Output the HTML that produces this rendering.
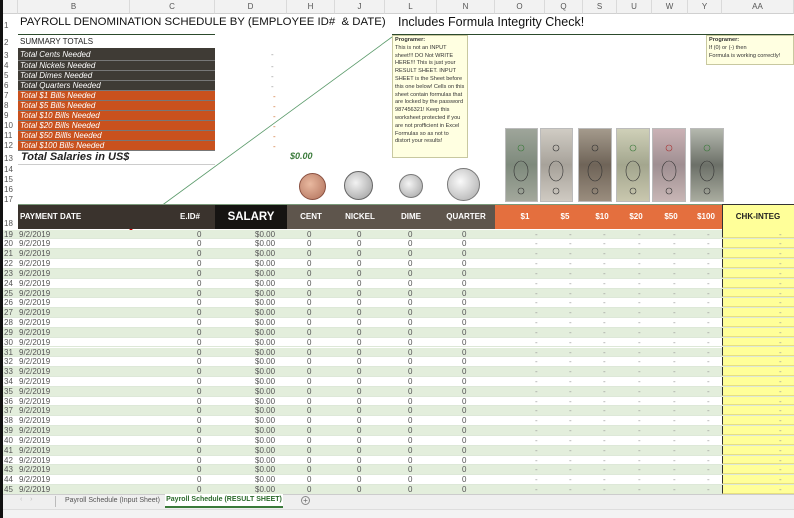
<!DOCTYPE html>
<html><head><meta charset="utf-8">
<style>
*{margin:0;padding:0;box-sizing:border-box}
body{width:794px;height:518px;overflow:hidden;background:#fff;font-family:"Liberation Sans",Arial,sans-serif;position:relative}
.a{position:absolute}
.ch{top:0;height:14px;background:#f2f2f2;border-bottom:1px solid #d0d0d0;font-size:8px;color:#555;text-align:center;line-height:14px;border-right:1px solid #dadada}
.rn{left:3px;width:15px;font-size:8px;color:#555;padding-left:1px;background:#fff}
.sum{left:18px;width:197px;height:10px;font-size:8px;font-style:italic;color:#fff;padding-left:2px;line-height:10px;border-bottom:1px solid #777}
.dk{background:#3f3b35}.or{background:#c9511d}
.dash{font-size:8px;color:#999}
.row{position:absolute;left:3px;width:791px;height:9.83px;font-size:8px;line-height:9.8px;color:#555;border-bottom:1px solid #dde8d8}
.row span{position:absolute;top:0}
.g{background:#e3eedc}
.h{top:205px;height:24px;font-size:8px;font-weight:bold;color:#fff;line-height:24px}
.bill{top:128px;height:74px;border:1px solid #bbb}
.coin{border-radius:50%}
.yel{left:722px;top:205px;width:72px;height:289px;background:#ffff99;border-left:1.5px solid #333}
</style></head><body>
<div class="a" style="left:0;top:0;width:3px;height:518px;background:#111"></div>
<div class="a ch" style="left:3px;width:15px"></div>
<div class="a ch" style="left:18px;width:112px">B</div>
<div class="a ch" style="left:130px;width:85px">C</div>
<div class="a ch" style="left:215px;width:72px">D</div>
<div class="a ch" style="left:287px;width:48px">H</div>
<div class="a ch" style="left:335px;width:50px">J</div>
<div class="a ch" style="left:385px;width:52px">L</div>
<div class="a ch" style="left:437px;width:58px">N</div>
<div class="a ch" style="left:495px;width:50px">O</div>
<div class="a ch" style="left:545px;width:38px">Q</div>
<div class="a ch" style="left:583px;width:34px">S</div>
<div class="a ch" style="left:617px;width:35px">U</div>
<div class="a ch" style="left:652px;width:36px">W</div>
<div class="a ch" style="left:688px;width:34px">Y</div>
<div class="a ch" style="left:722px;width:72px">AA</div>
<div class="a rn" style="top:21px">1</div>
<div class="a rn" style="top:38px">2</div>
<div class="a rn" style="top:51px">3</div>
<div class="a rn" style="top:61px">4</div>
<div class="a rn" style="top:71px">5</div>
<div class="a rn" style="top:81px">6</div>
<div class="a rn" style="top:91px">7</div>
<div class="a rn" style="top:101px">8</div>
<div class="a rn" style="top:111px">9</div>
<div class="a rn" style="top:121px">10</div>
<div class="a rn" style="top:131px">11</div>
<div class="a rn" style="top:141px">12</div>
<div class="a rn" style="top:154px">13</div>
<div class="a rn" style="top:165px">14</div>
<div class="a rn" style="top:175px">15</div>
<div class="a rn" style="top:185px">16</div>
<div class="a rn" style="top:195px">17</div>
<div class="a rn" style="top:219px">18</div>
<div class="a" style="left:20px;top:16px;font-size:11.4px;color:#111;white-space:nowrap">PAYROLL DENOMINATION SCHEDULE BY (EMPLOYEE ID#&nbsp; &amp; DATE)</div>
<div class="a" style="left:398px;top:15px;font-size:12.5px;color:#111">Includes Formula Integrity Check!</div>
<div class="a" style="left:18px;top:34px;width:197px;height:1px;background:#2c4a2c"></div>
<div class="a" style="left:392px;top:34px;width:402px;height:1px;background:#2c4a2c"></div>
<div class="a" style="left:20px;top:37px;font-size:8px;color:#222">SUMMARY TOTALS</div>
<div class="a sum dk" style="top:48px;height:13px;line-height:13px">Total Cents Needed</div>
<div class="a sum dk" style="top:61px">Total Nickels Needed</div>
<div class="a sum dk" style="top:71px">Total Dimes Needed</div>
<div class="a sum dk" style="top:81px">Total Quarters Needed</div>
<div class="a sum or" style="top:91px">Total $1 Bills Needed</div>
<div class="a sum or" style="top:101px">Total $5 Bills Needed</div>
<div class="a sum or" style="top:111px">Total $10 Bills Needed</div>
<div class="a sum or" style="top:121px">Total $20 Bills Needed</div>
<div class="a sum or" style="top:131px">Total $50 Billls Needed</div>
<div class="a sum or" style="top:141px">Total $100 Bills Needed</div>
<div class="a dash" style="left:271px;top:50px">-</div>
<div class="a dash" style="left:271px;top:62px">-</div>
<div class="a dash" style="left:271px;top:72px">-</div>
<div class="a dash" style="left:271px;top:82px">-</div>
<div class="a dash" style="left:273px;top:92px;color:#d07030">-</div>
<div class="a dash" style="left:273px;top:102px;color:#d07030">-</div>
<div class="a dash" style="left:273px;top:112px;color:#d07030">-</div>
<div class="a dash" style="left:273px;top:122px;color:#d07030">-</div>
<div class="a dash" style="left:273px;top:132px;color:#d07030">-</div>
<div class="a dash" style="left:273px;top:142px;color:#d07030">-</div>
<div class="a" style="left:21px;top:151px;font-size:11px;font-weight:bold;font-style:italic;color:#222">Total Salaries in US$</div>
<div class="a" style="left:18px;top:164px;width:197px;height:1px;background:#ccc"></div>
<div class="a" style="left:290px;top:151px;font-size:9px;font-weight:bold;font-style:italic;color:#3a7a3a">$0.00</div>
<div class="a" style="left:392px;top:35px;width:76px;height:123px;background:#ffffe1;border:1px solid #c8c8a0;font-size:5.6px;line-height:7.8px;color:#333;padding:1px 2px;overflow:hidden"><b>Programer:</b><br>This is not an INPUT sheet!!! DO Not WRITE HERE!!! This is just your RESULT SHEET. INPUT SHEET is the Sheet before this one below! Cells on this sheet contain formulas that are locked by the password 987456321! Keep this worksheet protected if you are not profficient in Excel Formulas so as not to distort your results!</div>
<div class="a" style="left:706px;top:35px;width:88px;height:30px;background:#ffffe1;border:1px solid #c8c8a0;font-size:5.6px;line-height:7.8px;color:#333;padding:1px 2px"><b>Programer:</b><br>If (0) or (-) then<br>Formula is working correctly!</div>
<svg class="a" style="left:0;top:0" width="794" height="518"><line x1="392" y1="37" x2="131" y2="228" stroke="#5a9a6a" stroke-width="0.8"/><circle cx="131" cy="229" r="1.5" fill="#c00"/></svg>
<div class="a coin" style="left:299px;top:173px;width:27px;height:27px;background:radial-gradient(circle at 40% 40%,#e9b9a0,#b0705a);border:1px solid #8a5040"></div>
<div class="a coin" style="left:344px;top:171px;width:29px;height:29px;background:radial-gradient(circle at 40% 40%,#f2f2f2,#9a9a9a);border:1px solid #666"></div>
<div class="a coin" style="left:399px;top:174px;width:24px;height:24px;background:radial-gradient(circle at 40% 40%,#f4f4f4,#a0a0a0);border:1px solid #777"></div>
<div class="a coin" style="left:447px;top:168px;width:33px;height:33px;background:radial-gradient(circle at 40% 40%,#fafafa,#a8a8a8);border:1px solid #777"></div>
<div class="a bill" style="left:505px;width:33px;background:linear-gradient(#9ea59a,#7e8a7c 50%,#a3a89c)"></div>
<div class="a bill" style="left:540px;width:33px;background:linear-gradient(#d0ccc4,#a7a29a 50%,#cfcac2)"></div>
<div class="a bill" style="left:578px;width:34px;background:linear-gradient(#a49a8c,#6f6458 50%,#9a8d7e)"></div>
<div class="a bill" style="left:616px;width:34px;background:linear-gradient(#cfd0b8,#a3a68e 50%,#c9c7ae)"></div>
<div class="a bill" style="left:652px;width:34px;background:linear-gradient(#cbb2b6,#9f8f92 50%,#c8b6b5)"></div>
<div class="a bill" style="left:690px;width:34px;background:linear-gradient(#b4b8ae,#6c7068 50%,#a9ac9f)"></div>
<svg class="a" style="left:0;top:0" width="794" height="518" fill="none" stroke="#333" stroke-width="0.6">
<circle cx="521" cy="148" r="3" stroke="#3a7a3a"/><ellipse cx="521" cy="171" rx="7" ry="10"/><circle cx="521" cy="191" r="3"/>
<circle cx="556" cy="148" r="3"/><ellipse cx="556" cy="171" rx="7" ry="10"/><circle cx="556" cy="191" r="3"/>
<circle cx="595" cy="148" r="3"/><ellipse cx="595" cy="171" rx="7" ry="10"/><circle cx="595" cy="191" r="3"/>
<circle cx="633" cy="148" r="3" stroke="#3a7a3a"/><ellipse cx="633" cy="171" rx="7" ry="10"/><circle cx="633" cy="191" r="3"/>
<circle cx="669" cy="148" r="3" stroke="#a33"/><ellipse cx="669" cy="171" rx="7" ry="10"/><circle cx="669" cy="191" r="3"/>
<circle cx="707" cy="148" r="3" stroke="#3a7a3a"/><ellipse cx="707" cy="171" rx="7" ry="10"/><circle cx="707" cy="191" r="3"/>
</svg>
<div class="a" style="left:18px;top:204px;width:704px;height:1px;background:#7a9a7a"></div>
<div class="a h" style="left:18px;width:197px;background:#3a332d;padding-left:2px">PAYMENT DATE<span style="position:absolute;left:162px">E.ID#</span></div>
<div class="a h" style="left:215px;width:72px;background:#161412;text-align:center;font-size:11.5px">SALARY</div>
<div class="a h" style="left:287px;width:208px;background:#5e554c"></div>
<div class="a h" style="left:287px;width:48px;text-align:center">CENT</div>
<div class="a h" style="left:335px;width:50px;text-align:center">NICKEL</div>
<div class="a h" style="left:385px;width:52px;text-align:center">DIME</div>
<div class="a h" style="left:437px;width:58px;text-align:center">QUARTER</div>
<div class="a h" style="left:495px;width:227px;background:#e46f3e"></div>
<div class="a h" style="left:505px;width:40px;text-align:center">$1</div>
<div class="a h" style="left:545px;width:40px;text-align:center">$5</div>
<div class="a h" style="left:583px;width:38px;text-align:center">$10</div>
<div class="a h" style="left:617px;width:38px;text-align:center">$20</div>
<div class="a h" style="left:652px;width:38px;text-align:center">$50</div>
<div class="a h" style="left:688px;width:36px;text-align:center">$100</div>
<div class="a yel"></div>
<div class="a h" style="left:722px;width:72px;text-align:center;color:#222;top:205px">CHK-INTEG</div>
<div class="a" style="left:722px;top:204px;width:72px;height:1px;background:#333"></div>
<style>
.r .n{left:1px}.r .b{left:16px}.r .c{left:194px}.r .d{left:252px}.r .hh{left:304px}.r .j{left:354px}.r .l{left:405px}.r .nn{left:459px}
.r .o,.r .q,.r .s,.r .u,.r .w,.r .y,.r .aa{color:#999}
.r .o{left:532px}.r .q{left:566px}.r .s{left:600px}.r .u{left:635px}.r .w{left:670px}.r .y{left:704px}.r .aa{left:776px}
.yc{position:absolute;left:719px;width:72px;height:100%;background:#ffff99;border-left:1.5px solid #333;border-bottom:1px solid #e8e080}
</style>
<div class="row r g" style="top:229.5px"><i class="yc"></i><span class="n">19</span><span class="b">9/2/2019</span><span class="c">0</span><span class="d">$0.00</span><span class="hh">0</span><span class="j">0</span><span class="l">0</span><span class="nn">0</span><span class="o">-</span><span class="q">-</span><span class="s">-</span><span class="u">-</span><span class="w">-</span><span class="y">-</span><span class="aa">-</span></div>
<div class="row r" style="top:239.3px"><i class="yc"></i><span class="n">20</span><span class="b">9/2/2019</span><span class="c">0</span><span class="d">$0.00</span><span class="hh">0</span><span class="j">0</span><span class="l">0</span><span class="nn">0</span><span class="o">-</span><span class="q">-</span><span class="s">-</span><span class="u">-</span><span class="w">-</span><span class="y">-</span><span class="aa">-</span></div>
<div class="row r g" style="top:249.2px"><i class="yc"></i><span class="n">21</span><span class="b">9/2/2019</span><span class="c">0</span><span class="d">$0.00</span><span class="hh">0</span><span class="j">0</span><span class="l">0</span><span class="nn">0</span><span class="o">-</span><span class="q">-</span><span class="s">-</span><span class="u">-</span><span class="w">-</span><span class="y">-</span><span class="aa">-</span></div>
<div class="row r" style="top:259.0px"><i class="yc"></i><span class="n">22</span><span class="b">9/2/2019</span><span class="c">0</span><span class="d">$0.00</span><span class="hh">0</span><span class="j">0</span><span class="l">0</span><span class="nn">0</span><span class="o">-</span><span class="q">-</span><span class="s">-</span><span class="u">-</span><span class="w">-</span><span class="y">-</span><span class="aa">-</span></div>
<div class="row r g" style="top:268.8px"><i class="yc"></i><span class="n">23</span><span class="b">9/2/2019</span><span class="c">0</span><span class="d">$0.00</span><span class="hh">0</span><span class="j">0</span><span class="l">0</span><span class="nn">0</span><span class="o">-</span><span class="q">-</span><span class="s">-</span><span class="u">-</span><span class="w">-</span><span class="y">-</span><span class="aa">-</span></div>
<div class="row r" style="top:278.7px"><i class="yc"></i><span class="n">24</span><span class="b">9/2/2019</span><span class="c">0</span><span class="d">$0.00</span><span class="hh">0</span><span class="j">0</span><span class="l">0</span><span class="nn">0</span><span class="o">-</span><span class="q">-</span><span class="s">-</span><span class="u">-</span><span class="w">-</span><span class="y">-</span><span class="aa">-</span></div>
<div class="row r g" style="top:288.5px"><i class="yc"></i><span class="n">25</span><span class="b">9/2/2019</span><span class="c">0</span><span class="d">$0.00</span><span class="hh">0</span><span class="j">0</span><span class="l">0</span><span class="nn">0</span><span class="o">-</span><span class="q">-</span><span class="s">-</span><span class="u">-</span><span class="w">-</span><span class="y">-</span><span class="aa">-</span></div>
<div class="row r" style="top:298.3px"><i class="yc"></i><span class="n">26</span><span class="b">9/2/2019</span><span class="c">0</span><span class="d">$0.00</span><span class="hh">0</span><span class="j">0</span><span class="l">0</span><span class="nn">0</span><span class="o">-</span><span class="q">-</span><span class="s">-</span><span class="u">-</span><span class="w">-</span><span class="y">-</span><span class="aa">-</span></div>
<div class="row r g" style="top:308.1px"><i class="yc"></i><span class="n">27</span><span class="b">9/2/2019</span><span class="c">0</span><span class="d">$0.00</span><span class="hh">0</span><span class="j">0</span><span class="l">0</span><span class="nn">0</span><span class="o">-</span><span class="q">-</span><span class="s">-</span><span class="u">-</span><span class="w">-</span><span class="y">-</span><span class="aa">-</span></div>
<div class="row r" style="top:318.0px"><i class="yc"></i><span class="n">28</span><span class="b">9/2/2019</span><span class="c">0</span><span class="d">$0.00</span><span class="hh">0</span><span class="j">0</span><span class="l">0</span><span class="nn">0</span><span class="o">-</span><span class="q">-</span><span class="s">-</span><span class="u">-</span><span class="w">-</span><span class="y">-</span><span class="aa">-</span></div>
<div class="row r g" style="top:327.8px"><i class="yc"></i><span class="n">29</span><span class="b">9/2/2019</span><span class="c">0</span><span class="d">$0.00</span><span class="hh">0</span><span class="j">0</span><span class="l">0</span><span class="nn">0</span><span class="o">-</span><span class="q">-</span><span class="s">-</span><span class="u">-</span><span class="w">-</span><span class="y">-</span><span class="aa">-</span></div>
<div class="row r" style="top:337.6px"><i class="yc"></i><span class="n">30</span><span class="b">9/2/2019</span><span class="c">0</span><span class="d">$0.00</span><span class="hh">0</span><span class="j">0</span><span class="l">0</span><span class="nn">0</span><span class="o">-</span><span class="q">-</span><span class="s">-</span><span class="u">-</span><span class="w">-</span><span class="y">-</span><span class="aa">-</span></div>
<div class="row r g" style="top:347.5px"><i class="yc"></i><span class="n">31</span><span class="b">9/2/2019</span><span class="c">0</span><span class="d">$0.00</span><span class="hh">0</span><span class="j">0</span><span class="l">0</span><span class="nn">0</span><span class="o">-</span><span class="q">-</span><span class="s">-</span><span class="u">-</span><span class="w">-</span><span class="y">-</span><span class="aa">-</span></div>
<div class="row r" style="top:357.3px"><i class="yc"></i><span class="n">32</span><span class="b">9/2/2019</span><span class="c">0</span><span class="d">$0.00</span><span class="hh">0</span><span class="j">0</span><span class="l">0</span><span class="nn">0</span><span class="o">-</span><span class="q">-</span><span class="s">-</span><span class="u">-</span><span class="w">-</span><span class="y">-</span><span class="aa">-</span></div>
<div class="row r g" style="top:367.1px"><i class="yc"></i><span class="n">33</span><span class="b">9/2/2019</span><span class="c">0</span><span class="d">$0.00</span><span class="hh">0</span><span class="j">0</span><span class="l">0</span><span class="nn">0</span><span class="o">-</span><span class="q">-</span><span class="s">-</span><span class="u">-</span><span class="w">-</span><span class="y">-</span><span class="aa">-</span></div>
<div class="row r" style="top:376.9px"><i class="yc"></i><span class="n">34</span><span class="b">9/2/2019</span><span class="c">0</span><span class="d">$0.00</span><span class="hh">0</span><span class="j">0</span><span class="l">0</span><span class="nn">0</span><span class="o">-</span><span class="q">-</span><span class="s">-</span><span class="u">-</span><span class="w">-</span><span class="y">-</span><span class="aa">-</span></div>
<div class="row r g" style="top:386.8px"><i class="yc"></i><span class="n">35</span><span class="b">9/2/2019</span><span class="c">0</span><span class="d">$0.00</span><span class="hh">0</span><span class="j">0</span><span class="l">0</span><span class="nn">0</span><span class="o">-</span><span class="q">-</span><span class="s">-</span><span class="u">-</span><span class="w">-</span><span class="y">-</span><span class="aa">-</span></div>
<div class="row r" style="top:396.6px"><i class="yc"></i><span class="n">36</span><span class="b">9/2/2019</span><span class="c">0</span><span class="d">$0.00</span><span class="hh">0</span><span class="j">0</span><span class="l">0</span><span class="nn">0</span><span class="o">-</span><span class="q">-</span><span class="s">-</span><span class="u">-</span><span class="w">-</span><span class="y">-</span><span class="aa">-</span></div>
<div class="row r g" style="top:406.4px"><i class="yc"></i><span class="n">37</span><span class="b">9/2/2019</span><span class="c">0</span><span class="d">$0.00</span><span class="hh">0</span><span class="j">0</span><span class="l">0</span><span class="nn">0</span><span class="o">-</span><span class="q">-</span><span class="s">-</span><span class="u">-</span><span class="w">-</span><span class="y">-</span><span class="aa">-</span></div>
<div class="row r" style="top:416.3px"><i class="yc"></i><span class="n">38</span><span class="b">9/2/2019</span><span class="c">0</span><span class="d">$0.00</span><span class="hh">0</span><span class="j">0</span><span class="l">0</span><span class="nn">0</span><span class="o">-</span><span class="q">-</span><span class="s">-</span><span class="u">-</span><span class="w">-</span><span class="y">-</span><span class="aa">-</span></div>
<div class="row r g" style="top:426.1px"><i class="yc"></i><span class="n">39</span><span class="b">9/2/2019</span><span class="c">0</span><span class="d">$0.00</span><span class="hh">0</span><span class="j">0</span><span class="l">0</span><span class="nn">0</span><span class="o">-</span><span class="q">-</span><span class="s">-</span><span class="u">-</span><span class="w">-</span><span class="y">-</span><span class="aa">-</span></div>
<div class="row r" style="top:435.9px"><i class="yc"></i><span class="n">40</span><span class="b">9/2/2019</span><span class="c">0</span><span class="d">$0.00</span><span class="hh">0</span><span class="j">0</span><span class="l">0</span><span class="nn">0</span><span class="o">-</span><span class="q">-</span><span class="s">-</span><span class="u">-</span><span class="w">-</span><span class="y">-</span><span class="aa">-</span></div>
<div class="row r g" style="top:445.7px"><i class="yc"></i><span class="n">41</span><span class="b">9/2/2019</span><span class="c">0</span><span class="d">$0.00</span><span class="hh">0</span><span class="j">0</span><span class="l">0</span><span class="nn">0</span><span class="o">-</span><span class="q">-</span><span class="s">-</span><span class="u">-</span><span class="w">-</span><span class="y">-</span><span class="aa">-</span></div>
<div class="row r" style="top:455.6px"><i class="yc"></i><span class="n">42</span><span class="b">9/2/2019</span><span class="c">0</span><span class="d">$0.00</span><span class="hh">0</span><span class="j">0</span><span class="l">0</span><span class="nn">0</span><span class="o">-</span><span class="q">-</span><span class="s">-</span><span class="u">-</span><span class="w">-</span><span class="y">-</span><span class="aa">-</span></div>
<div class="row r g" style="top:465.4px"><i class="yc"></i><span class="n">43</span><span class="b">9/2/2019</span><span class="c">0</span><span class="d">$0.00</span><span class="hh">0</span><span class="j">0</span><span class="l">0</span><span class="nn">0</span><span class="o">-</span><span class="q">-</span><span class="s">-</span><span class="u">-</span><span class="w">-</span><span class="y">-</span><span class="aa">-</span></div>
<div class="row r" style="top:475.2px"><i class="yc"></i><span class="n">44</span><span class="b">9/2/2019</span><span class="c">0</span><span class="d">$0.00</span><span class="hh">0</span><span class="j">0</span><span class="l">0</span><span class="nn">0</span><span class="o">-</span><span class="q">-</span><span class="s">-</span><span class="u">-</span><span class="w">-</span><span class="y">-</span><span class="aa">-</span></div>
<div class="row r g" style="top:485.1px"><i class="yc"></i><span class="n">45</span><span class="b">9/2/2019</span><span class="c">0</span><span class="d">$0.00</span><span class="hh">0</span><span class="j">0</span><span class="l">0</span><span class="nn">0</span><span class="o">-</span><span class="q">-</span><span class="s">-</span><span class="u">-</span><span class="w">-</span><span class="y">-</span><span class="aa">-</span></div>
<div class="a" style="left:3px;top:494px;width:791px;height:15px;background:#efefef;border-top:1px solid #ccc"></div>
<div class="a" style="left:3px;top:509px;width:791px;height:9px;background:#f3f3f3;border-top:1px solid #ddd"></div>
<div class="a" style="left:20px;top:496px;font-size:7px;color:#bbb">&lsaquo;&nbsp;&nbsp;&nbsp;&nbsp;&rsaquo;</div>
<div class="a" style="left:55px;top:496px;width:1px;height:11px;background:#bbb"></div>
<div class="a" style="left:65px;top:497px;font-size:7px;color:#555">Payroll Schedule (Input Sheet)</div>
<div class="a" style="left:165px;top:494px;width:118px;height:14px;background:#fff;border-bottom:2px solid #3a7a3a;font-size:7px;color:#2a6a2a;font-weight:bold;text-align:center;line-height:12px">Payroll Schedule (RESULT SHEET)</div>
<div class="a" style="left:301px;top:496px;width:9px;height:9px;border:1px solid #888;border-radius:50%;font-size:8px;line-height:7px;text-align:center;color:#666">+</div>
</body></html>
